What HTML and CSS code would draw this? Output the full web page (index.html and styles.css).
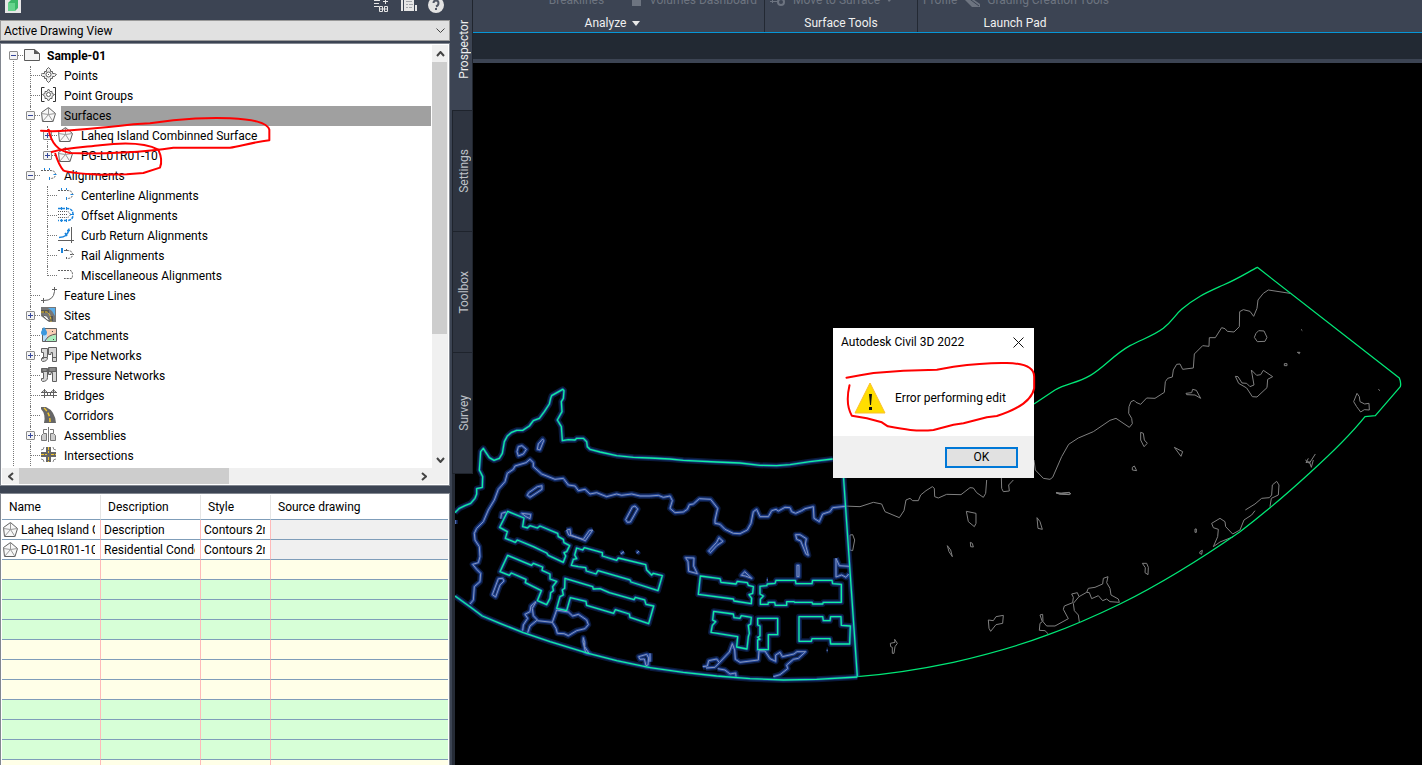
FILE: index.html
```
<!DOCTYPE html>
<html lang="en">
<head>
  <meta charset="UTF-8">
  <meta name="viewport" content="width=device-width, initial-scale=1.0">
  <title>Autodesk Civil 3D 2022</title>
  <link rel="stylesheet" href="styles.css">
</head>
<body>

  <!-- Icon set -->
  <svg class="sprite" aria-hidden="true">
    <symbol id="i-drawing" viewBox="0 0 16 16"><path d="M.5 2.500h10l5 4v7H.5z" fill="#f4f4f4" stroke="#5a5a5a"/><path d="M10 2l6 5h-6z" fill="#5a5a5a"/></symbol>
    <symbol id="i-points" viewBox="0 0 16 16" fill="none" stroke="#606060"><path d="M7.500 .5l2 2v2h2v2h2l2 1-2 2h-2v2h-2v2l-2 2-2-2v-2h-2v-2h-2l-2-2 2-1h2v-2h2v-2z" fill="#eee"/><circle cx="7.500" cy="7.500" r="2.500" fill="#fff"/><path d="M7 7.500h1"/></symbol>
    <symbol id="i-groups" viewBox="0 0 16 16" fill="none" stroke="#303030"><path d="M3.500 .5h-3v14h3M12 .5h2.500v14H12"/><path d="M7.500 2l1.500 2.500h2v2l2.500 1-2.500 2v2H9L7.500 14 6 11.500H4v-2L1.500 7.500 4 6.500v-2h2z" fill="#eee" stroke="#666"/><circle cx="7.500" cy="7.500" r="2" fill="#fff" stroke="#666"/></symbol>
    <symbol id="i-surface" viewBox="0 0 16 16" fill="#f8f8f8" stroke="#606060"><path d="M7.500 .5l7 6-2.500 8H1.500l-1-9z"/><path d="M7.500 .5v7l-7-1M7.500 7.500l7-1M7.500 7.500l-6 7M7.500 7.500l4.500 7" fill="none" stroke="#999"/></symbol>
    <symbol id="i-align" viewBox="0 0 16 16" fill="none" stroke="#606060"><path d="M0 3.500h9q5.500 0 5.500 4t-5.500 4" stroke-dasharray="2 1"/><path d="M3.500 1v2M8.500 1v2M12.500 7.500h3M8.500 10v3" stroke="#1a84dc"/></symbol>
    <symbol id="i-offset" viewBox="0 0 16 16" fill="none" stroke="#1a84dc"><path d="M0 1.500h9q6 0 6 6t-6 6H0" stroke-width="1.500" stroke-dasharray="3 1"/><path d="M0 4.500h8q4 0 4 3t-4 3H0M0 7.500h10" stroke="#555" stroke-dasharray="1 1"/><path d="M3.500 0v3M8.500 0v3M3.500 12v3M8.500 12v3M12 7.500h4"/></symbol>
    <symbol id="i-curb" viewBox="0 0 16 16" fill="none" stroke="#606060"><path d="M13.500 0v16M0 13.500h16"/><path d="M1 10.500q9 0 10-9M7 6l2 3M9 3.500h3" stroke="#1a84dc" stroke-width="1.500"/></symbol>
    <symbol id="i-rail" viewBox="0 0 16 16" fill="none" stroke="#606060"><path d="M0 3.500h9q5.500 0 5.500 4t-5.500 4M8.500 2v3M8.500 10v3M12 7.500h4" stroke-dasharray="2 1"/><path d="M4 1v5" stroke="#1a84dc" stroke-width="2"/></symbol>
    <symbol id="i-misc" viewBox="0 0 16 16" fill="none" stroke="#606060"><path d="M0 3.500h12q2.500 0 2.500 4.500T12 11.500H6" stroke-dasharray="2 1"/></symbol>
    <symbol id="i-feature" viewBox="0 0 16 16" fill="none" stroke="#606060"><path d="M0 13.500h3q9.500 0 10.500-9V0M11 2.500h5M2.500 11v5"/></symbol>
    <symbol id="i-sites" viewBox="0 0 16 16"><path d="M0 0h15v15H8L0 9z" fill="#777"/><path d="M7 1h7v8L11 4z" fill="#5aaeea"/><path d="M0 3h8v3H0zM9 9h3v5H9z" fill="#555"/><path d="M0 5h6q4 2 4 10" fill="none" stroke="#f3c62b" stroke-dasharray="3 1"/><path d="M1 8l5 1 3 5-3-1z" fill="#eee" stroke="#666"/></symbol>
    <symbol id="i-catch" viewBox="0 0 16 16"><path d="M1.500 1.500h14v13h-14z" fill="#f8ceb4" stroke="#606060"/><path d="M5 14q3-6 10-6v6z" fill="#a8eebc"/><path d="M2 7h4v7H2z" fill="#b9ddfa"/><path d="M4 14q3-6 11-7" fill="none" stroke="#555"/><path d="M3 0q3 4 3 5.500a3 3 0 01-6 0Q0 4 3 0z" fill="#3c98dd"/><path d="M11 4h1v1h-1zM12 12h1v1h-1z" fill="#444"/></symbol>
    <symbol id="i-pipe" viewBox="0 0 16 16" fill="#d6d6d6" stroke="#606060"><path d="M.5 1.500h6v9q0 4-5 4l-1-1v-2h2v-6h-2z"/><path d="M7.500 .5h8v14h-4v-9h-1.500v2H7.500zM1 10.500h5M11.500 10.500h4"/></symbol>
    <symbol id="i-pressure" viewBox="0 0 16 16" fill="#d6d6d6" stroke="#606060"><path d="M.5 1.500h6v9q0 4-5 4l-1-1v-2h2v-6h-2z"/><path d="M7.500 .5h8v14h-4v-9h-1.500v2H7.500z"/><path d="M1 1.500h5v3H1zM8 .5h7v4H8z" fill="#888"/></symbol>
    <symbol id="i-bridge" viewBox="0 0 16 16" fill="none" stroke="#606060"><path d="M0 5.500h16M0 8.500h16M3.500 2v9M12.500 2v9M6.500 5v4M9.500 5v4M1 5l2.500-2L6 5M10 5l2.500-2L15 5"/></symbol>
    <symbol id="i-corridor" viewBox="0 0 16 16"><path d="M0 0h5q9 4 10 16H3Q5 7 0 2z" fill="#666"/><path d="M3 1q6 5 6 14" fill="none" stroke="#f3c62b" stroke-width="1.500" stroke-dasharray="4 2"/></symbol>
    <symbol id="i-assembly" viewBox="0 0 16 16" fill="#ccc" stroke="#777"><path d="M.5 8.500l2-2h3v7h-5zM9.500 6.500h3l2 2v5h-5z"/><path d="M2.500 6V2.500H6M9 2.500h3.500V6" fill="none"/><path d="M7.500 0v15"/></symbol>
    <symbol id="i-intersect" viewBox="0 0 16 16"><path d="M5 0h5v5h5v5h-5v5H5v-5H0V5h5z" fill="#666"/><path d="M7.500 0v6M7.500 10v5M0 7.500h6M10 7.500h5" stroke="#f3c62b" stroke-dasharray="3 1"/><path d="M0 3q3 0 3-3M15 3q-3 0-3-3M0 12q3 0 3 3M15 12q-3 0-3 3" stroke="#888" fill="none"/></symbol>
  </svg>

  <div class="app">

    <!-- Toolspace palette -->
    <aside class="toolspace">
      <div class="palette-bar">
        <button class="tool cube" aria-label="Toggle view">
          <svg width="16" height="13"><path d="M0 0h16v13H0z" fill="#e6e6e6"/><path d="M3 3l3-3h7v8l-3 3H3z" fill="#3cb768"/><path d="M3 3h7v8H3z" fill="#66d48c"/></svg>
        </button>
        <button class="tool" aria-label="Item view"><svg width="16" height="13" stroke="#e6e6e6" fill="none"><path d="M0 .5h6M0 3.500h5M0 6.500h5M11.500 0v4M9 1.500h5"/><path d="M5.500 6.500h3v5h-3zM10.500 6.500h3v5h-3zM5 9h9"/></svg></button>
        <button class="tool" aria-label="Panorama"><svg width="16" height="13"><path d="M0 0h2v11H0zM3 0h10v11H3zM14 5h2v6h-2z" fill="#e6e6e6"/><path d="M5 1.500h6M5 4.500h2M8 4.500h4M5 7.500h2M8 7.500h3" stroke="#a2a5aa"/></svg></button>
        <button class="tool" aria-label="Help"><svg width="16" height="13"><circle cx="8" cy="5" r="8" fill="#e3e3e3"/><path d="M5.500 3q0-2.500 2.500-2.500T10.500 3 8 6.500" fill="none" stroke="#525866" stroke-width="2"/><path d="M7 8h2v2H7z" fill="#525866"/></svg></button>
      </div>

      <div class="view-picker">
        <select aria-label="View"><option>Active Drawing View</option></select>
        <svg class="chevron" width="9" height="6"><path d="M.5 .5l4 4 4-4" fill="none" stroke="#444"/></svg>
      </div>

      <div class="tree-panel">
        <ul class="tree">
          <li>
            <div class="row"><button class="toggle" aria-label="Collapse"></button><svg class="icon"><use href="#i-drawing"/></svg><b class="label">Sample-01</b></div>
            <ul>
              <li><div class="row"><svg class="icon"><use href="#i-points"/></svg><span class="label">Points</span></div></li>
              <li><div class="row"><svg class="icon"><use href="#i-groups"/></svg><span class="label">Point Groups</span></div></li>
              <li>
                <div class="row selected"><button class="toggle" aria-label="Collapse"></button><svg class="icon"><use href="#i-surface"/></svg><span class="label">Surfaces</span></div>
                <ul>
                  <li><div class="row"><button class="toggle closed" aria-label="Expand"></button><svg class="icon"><use href="#i-surface"/></svg><span class="label">Laheq Island Combinned Surface</span></div></li>
                  <li><div class="row"><button class="toggle closed" aria-label="Expand"></button><svg class="icon"><use href="#i-surface"/></svg><span class="label">PG-L01R01-10</span></div></li>
                </ul>
              </li>
              <li>
                <div class="row"><button class="toggle" aria-label="Collapse"></button><svg class="icon"><use href="#i-align"/></svg><span class="label">Alignments</span></div>
                <ul>
                  <li><div class="row"><svg class="icon"><use href="#i-align"/></svg><span class="label">Centerline Alignments</span></div></li>
                  <li><div class="row"><svg class="icon"><use href="#i-offset"/></svg><span class="label">Offset Alignments</span></div></li>
                  <li><div class="row"><svg class="icon"><use href="#i-curb"/></svg><span class="label">Curb Return Alignments</span></div></li>
                  <li><div class="row"><svg class="icon"><use href="#i-rail"/></svg><span class="label">Rail Alignments</span></div></li>
                  <li><div class="row"><svg class="icon"><use href="#i-misc"/></svg><span class="label">Miscellaneous Alignments</span></div></li>
                </ul>
              </li>
              <li><div class="row"><svg class="icon"><use href="#i-feature"/></svg><span class="label">Feature Lines</span></div></li>
              <li><div class="row"><button class="toggle closed" aria-label="Expand"></button><svg class="icon"><use href="#i-sites"/></svg><span class="label">Sites</span></div></li>
              <li><div class="row"><svg class="icon"><use href="#i-catch"/></svg><span class="label">Catchments</span></div></li>
              <li><div class="row"><button class="toggle closed" aria-label="Expand"></button><svg class="icon"><use href="#i-pipe"/></svg><span class="label">Pipe Networks</span></div></li>
              <li><div class="row"><svg class="icon"><use href="#i-pressure"/></svg><span class="label">Pressure Networks</span></div></li>
              <li><div class="row"><svg class="icon"><use href="#i-bridge"/></svg><span class="label">Bridges</span></div></li>
              <li><div class="row"><svg class="icon"><use href="#i-corridor"/></svg><span class="label">Corridors</span></div></li>
              <li><div class="row"><button class="toggle closed" aria-label="Expand"></button><svg class="icon"><use href="#i-assembly"/></svg><span class="label">Assemblies</span></div></li>
              <li><div class="row"><svg class="icon"><use href="#i-intersect"/></svg><span class="label">Intersections</span></div></li>
            </ul>
          </li>
        </ul>
        <div class="scroll-v">
          <button aria-label="Scroll up"><svg width="9" height="6"><path d="M1 5l3.500-4L8 5" /></svg></button>
          <div class="thumb"></div>
          <button aria-label="Scroll down"><svg width="9" height="6"><path d="M1 1l3.500 4L8 1"/></svg></button>
        </div>
        <div class="scroll-h">
          <button aria-label="Scroll left"><svg width="6" height="9"><path d="M5 1L1 4.500 5 8"/></svg></button>
          <div class="thumb"></div>
          <button aria-label="Scroll right"><svg width="6" height="9"><path d="M1 1l4 3.500L1 8"/></svg></button>
        </div>
        <!-- Markup around the two surfaces -->
        <svg class="markup tree-markup" viewBox="120 -25 696 195">
          <path d="M123 31L157 33C240 30 330 20 400 12L450 9 520 0C600-8 640-8 690-6 760-2 800 5 808 28L808 60C760 65 720 78 690 82L520 82C440 95 300 102 210 98 160 90 150 50 146 28"/>
          <path d="M155 95C200 82 260 80 300 75 380 65 440 70 475 88 485 110 485 130 480 142L430 158 380 162 300 163C240 160 200 155 190 150 178 135 172 120 166 100"/>
        </svg>
      </div>

      <div class="list-panel">
        <table>
          <colgroup><col class="c-name"><col class="c-desc"><col class="c-style"><col></colgroup>
          <thead>
            <tr><th>Name</th><th>Description</th><th>Style</th><th>Source drawing</th></tr>
          </thead>
          <tbody>
            <tr><td><div class="cell"><svg class="icon"><use href="#i-surface"/></svg><span>Laheq Island C</span></div></td><td><div class="cell"><span>Description</span></div></td><td><div class="cell"><span>Contours 2m</span></div></td><td class="locked"></td></tr>
            <tr><td><div class="cell"><svg class="icon"><use href="#i-surface"/></svg><span>PG-L01R01-10</span></div></td><td><div class="cell"><span>Residential Condo</span></div></td><td><div class="cell"><span>Contours 2m</span></div></td><td class="locked"></td></tr>
            <tr class="cream"><td></td><td></td><td></td><td></td></tr>
            <tr class="green"><td></td><td></td><td></td><td></td></tr>
            <tr class="green"><td></td><td></td><td></td><td></td></tr>
            <tr class="green"><td></td><td></td><td></td><td></td></tr>
            <tr class="cream"><td></td><td></td><td></td><td></td></tr>
            <tr class="cream"><td></td><td></td><td></td><td></td></tr>
            <tr class="cream"><td></td><td></td><td></td><td></td></tr>
            <tr class="green"><td></td><td></td><td></td><td></td></tr>
            <tr class="green"><td></td><td></td><td></td><td></td></tr>
            <tr class="green"><td></td><td></td><td></td><td></td></tr>
            <tr class="cream"><td></td><td></td><td></td><td></td></tr>
          </tbody>
        </table>
      </div>
    </aside>

    <main class="workspace">
      <nav class="side-tabs">
        <button class="active"><span>Prospector</span></button>
        <button><span>Settings</span></button>
        <button><span>Toolbox</span></button>
        <button><span>Survey</span></button>
      </nav>

      <div class="ribbon">
        <section class="panel analyze">
          <div class="commands"><span>Breaklines</span><svg width="9" height="12"><path d="M0 0h9v12H0z" fill="#6d7480"/></svg><span>Volumes Dashboard</span></div>
          <button class="panel-title">Analyze <svg width="8" height="5"><path d="M0 0h8L4 5z" fill="#e8e8e8"/></svg></button>
        </section>
        <section class="panel surface-tools">
          <div class="commands"><svg width="16" height="14" fill="none" stroke="#6d7480"><path d="M2.500 0v10M0 8.500h9"/><circle cx="11" cy="9" r="3" stroke-width="2"/></svg><span>Move to Surface</span><svg width="5" height="3"><path d="M0 0h5L2 3z" fill="#6d7480"/></svg></div>
          <div class="panel-title">Surface Tools</div>
        </section>
        <section class="panel launch">
          <div class="commands"><span>Profile</span><svg width="16" height="14"><path d="M0 6l6-2 10 7v3H8z" fill="#6d7480"/><path d="M3 4l12 9" stroke="#3c4453"/></svg><span>Grading Creation Tools</span></div>
          <div class="panel-title">Launch Pad</div>
        </section>
      </div>
      <div class="file-tabs"></div>

      <div class="canvas">
        <svg class="plan" viewBox="455 63 967 702" preserveAspectRatio="xMinYMin slice">
          <defs>
            <g id="sel-boundary">
              <g transform="translate(450 370) scale(.33333)">
                <path d="M15 428L28 415 45 407 62 400 75 385 80 372 80 356 97 352 98 320 88 300 92 245 100 235 106 245 118 263 132 271 148 265 157 250 163 215 172 198 185 187 200 181 218 181 238 168 250 152 268 145 283 125 298 102 302 85 305 77 338 58 342 62 340 85 334 95 336 125 322 150 334 170 337 212 355 209 375 210 380 205 400 205 410 215 412 230 420 238 450 246 500 257 550 262 600 264"/>
                <path d="M15 678L60 710 97 738 150 760 220 788 300 815 415 850 500 872 600 893"/>
                <path d="M173 424L222 444 218 470 232 474 240 467 262 474 270 468 323 490 325 500 340 508 342 518 359 527 350 545 342 548 347 558 340 577 295 556 290 549 250 530 202 510 196 517 166 505 172 485 149 472Z"/>
                <path d="M380 534L398 540 403 533 457 548 457 558 500 571 505 564 587 584 590 600 605 615 610 610 637 617 624 662 543 636 540 630 444 602 438 612 409 603 407 593 385 590 364 586 370 568 380 566 374 555Z"/>
                <path d="M173 556L245 586 250 580 278 591 276 601 300 612 300 627 320 634 308 650 310 662 302 668 300 685 290 704 262 692 274 662 226 638 228 628 184 609 178 616 150 605Z"/>
                <path d="M345 625L428 650 430 657 450 656 478 668 552 689 556 682 584 690 588 703 611 708 596 761 540 742 538 732 496 719 491 730 410 706 408 694 361 683 350 722 320 715 330 680 340 675 337 660 344 655Z"/>
              </g>
              <g transform="translate(650 440) scale(.33333)">
                <path d="M0 54L60 57 100 61 200 66 270 69 330 76 380 77 420 74 480 65 548 57M577 60L622 710"/>
                <path d="M0 683L100 697 200 708 300 716 400 720 500 718 622 711"/>
                <path d="M151 408L210 416 213 427 258 432 262 424 292 428 295 436 310 440 308 460 297 464 305 475 304 491 252 483 250 477 145 463Z"/>
                <path d="M330 439L350 437 352 432 375 430 378 421 436 421 438 431 486 431 488 421 546 421 548 431 574 433 574 487 520 487 518 492 488 492 486 487 434 487 432 485 410 485 410 496 376 496 374 487 355 487 354 493 331 493 331 478 340 468 330 462Z"/>
                <path d="M191 514L250 522 252 533 270 535 274 527 304 532 302 552 295 556 298 580 295 590 291 627 260 621 263 590 183 577 187 556 197 545 188 540Z"/>
                <path d="M323 535L383 535 383 584 355 584 355 629 323 629 323 600 330 598 323 592 330 588 330 558 323 555Z"/>
                <path d="M447 530L518 530 520 542 540 542 542 530 573 530 574 556 601 558 599 612 542 612 540 596 486 596 484 604 447 604Z"/>
              </g>
            </g>
            <g id="sel-contours">
              <g transform="translate(450 370) scale(.33333)">
                <path d="M60 702L70 690 73 650 90 635 92 610 80 598 68 583 85 578 90 560 88 530 75 510 73 490 80 475 100 455 115 420 133 390 145 358 165 335 172 310 190 298 195 288 228 278 240 268 250 278 250 290 275 312 315 328 340 325 355 345 375 348 385 362 405 358 420 372 440 368 470 380 500 372 515 376 545 372 570 378 600 378"/>
                <path d="M205 230L216 227 229 238 220 252 205 258 201 245ZM278 207L281 212 270 240 262 238 265 222ZM232 376L236 368 262 350 276 347 276 358 240 382ZM547 411L555 408 563 417 541 456 532 457 527 449ZM127 674L145 626 158 625 162 633 150 645 137 681Z"/>
                <path d="M152 446L155 430 168 426M215 430L242 433 240 446 228 440ZM350 480L360 478 362 495 406 512 428 480M350 480L356 495 400 508 418 482 428 480M512 552L522 545M560 550L567 543M15 450V462"/>
                <path d="M218 782L220 765 233 745 225 733 240 725 243 708 258 695M258 695L247 715 250 737 262 750 240 768 233 788M262 752L307 757 320 720 355 726 368 738 385 733 410 750 415 764 405 776 380 782 355 797 342 791 322 790 318 775 307 757M400 803L404 818 404 830 417 850 407 848 399 815ZM566 860L590 853 596 864 594 885 588 887 583 867 570 868Z"/>
              </g>
              <g transform="translate(650 440) scale(.33333)">
                <path d="M0 168L25 166 40 172 60 168 67 182 60 205 75 218 100 216 112 208 118 194 130 192 148 176 182 178 203 205 195 240 195 250 210 253 225 268 250 280 270 281 292 270 303 250 310 215 320 208 330 230 355 230 365 212 378 208 385 213 405 202 420 203 425 215 437 220 455 212 465 206 490 200 492 235 508 245 518 222 540 215 548 203 585 199"/>
                <path d="M176 333L200 307 207 293 219 304 200 317 181 338ZM107 353L132 354 131 378 142 401 116 394 114 365ZM437 284L450 284 469 296 466 312 475 346 468 342 452 303 440 298ZM274 406L284 395 305 415 286 408ZM441 376H447V410H441ZM558 355V411L575 405 588 412 596 402M558 355L568 377 597 379M350 420L354 420M530 631L533 631M0 640V665"/>
                <path d="M158 680L172 678 176 662 200 657 208 668 195 682 168 684M203 686L225 690 240 702 257 699 258 710M208 668L238 636 247 611 254 630 256 658 270 667 325 660 327 632 345 633 360 656 377 664 377 645 390 637 397 650 432 642 441 635 467 635 445 655 430 658 410 675 413 686 390 704 370 710"/>
              </g>
            </g>
          </defs>

          <!-- Unselected surface -->
          <g class="contour">
            <g transform="translate(1030 250) scale(.33333)">
              <path d="M12 630L16 660 40 685 60 688 68 682 95 620 116 583 145 564 190 545 240 511 258 505 298 532 307 521 305 505 296 490 297 470 303 455 312 451 318 457 332 463 350 444 375 445 403 427 406 395 413 385 427 381 430 360 440 343 450 342 458 358 490 354 493 312 518 287 537 289 538 263 556 263 575 233 585 236 592 244 612 246 628 230 629 185 640 179 660 184 671 199 681 175 684 150 700 130 715 120 780 130"/>
              <path d="M678 250L686 242 702 243 711 262 705 274 682 275 673 262ZM616 379L624 380 636 399 650 400 660 410 672 405 664 360 680 376 692 374 700 361 728 380 713 388 711 413 681 441 667 440 650 414 626 400ZM468 430L485 428 488 418 499 421 512 445 495 435 470 434ZM332 547L340 550 343 570 352 580 342 590 332 570ZM433 592L458 605 453 619ZM307 652L313 648 320 662 307 660ZM78 728L90 730 118 727 122 731 118 734 88 732ZM981 430L988 440 990 455 1004 462 1017 460 1018 480 1003 479 992 486 980 470 971 455ZM813 238L817 242M802 307L810 307 808 311ZM763 341L771 341 771 347H763ZM1045 418L1050 422M826 630L838 640 856 612M835 625L828 638 838 635 844 652 850 630M720 770L724 745 745 735 747 705 740 694 727 705 725 735 718 743 695 745 675 762 646 780"/>
            </g>
            <g transform="translate(840 480) scale(.33333)">
              <path d="M10 78L60 80 100 67 125 72 135 95 178 113 192 92 198 60 210 55 218 62 235 62 242 45 258 32 277 20 283 25 284 50 295 54 320 43 363 44 390 23 400 24 410 38 430 52 437 40 440 0M484-10L485 25 490 35 508 33 506 15 520 0M30 165L38 164 44 180 38 212 30 210ZM379 94L408 100 408 130 403 140 385 125ZM591 113L600 125 607 148 594 145ZM648 38L665 40 687 38 692 41 685 43 658 42ZM322 197L332 210 337 230 327 215ZM391 187L397 190 400 201 392 200ZM1065 147H1069V157H1065ZM1080 215L1087 211 1085 223 1079 220ZM907 250L920 250 925 262 924 284 915 278 916 263Z"/>
              <path d="M151 490L165 487 164 478 172 490 165 500 162 520 157 520V502L152 500ZM445 420L460 422 468 410 490 406 488 430 468 434 452 454 447 445ZM625 462L615 452 598 451 600 430 607 425 600 405 608 403 609 425 620 438 645 438 685 416 670 388 673 378 698 368 700 352 695 342 712 338 717 350 700 370 703 392 715 405 718 426M717 350L740 337 745 325 765 322 788 312 790 295 804 290 800 308 810 325 813 345 835 357 838 367 810 365 800 357 788 362 775 347 755 356 748 338 740 337M1115 130L1140 115 1155 125 1157 140 1178 162 1200 150M1115 130L1120 143 1135 148 1133 170 1120 200 1140 186 1180 170"/>
              <path d="M1200 150L1212 120 1235 105 1245 92"/>
            </g>
          </g>
          <g class="boundary">
            <g transform="translate(1030 250) scale(.33333)">
              <path d="M12 462L75 420C110 400 140 400 180 377 225 350 250 315 300 287 335 268 370 258 400 235 430 210 435 195 455 178 500 140 530 128 580 105 620 88 655 66 682 52L1108 384Q1114 398 1111 410L1036 497 1005 500C960 556 900 614 840 668 770 732 700 792 630 845"/>
            </g>
            <g transform="translate(840 480) scale(.33333)">
              <path d="M52 590C150 582 245 567 340 547 440 524 535 498 625 464 700 437 770 406 840 372 965 310 1085 235 1200 155"/>
            </g>
          </g>

          <!-- Selected surface, highlighted -->
          <use class="halo" href="#sel-contours"/>
          <use class="halo" href="#sel-boundary"/>
          <use class="halo-inner strong" href="#sel-contours"/>
          <use class="halo-inner" href="#sel-boundary"/>
          <use class="core-contour" href="#sel-contours"/>
          <use class="core-boundary" href="#sel-boundary"/>
        </svg>
      </div>

      <div class="dialog" role="alertdialog" aria-labelledby="dlg-title">
        <header>
          <span id="dlg-title">Autodesk Civil 3D 2022</span>
          <button class="close" aria-label="Close"><svg width="11" height="11"><path d="M.5 .5l10 10M10.500 .5l-10 10" stroke="#111"/></svg></button>
        </header>
        <div class="message">
          <svg width="32" height="32"><path d="M16 1L31 31H1z" fill="#ffde00" stroke="#fbc02d" stroke-linejoin="round"/><path d="M15 12h3l-1 11h-1zM15 25h3v3h-3z" fill="#111"/></svg>
          <p>Error performing edit</p>
        </div>
        <footer><button class="ok">OK</button></footer>
        <svg class="markup dialog-markup" viewBox="75 120 575 216">
          <path d="M79 173L120 166 160 159 250 152 350 149 400 140C460 132 520 128 560 129 620 130 642 145 642 170L642 205C635 240 600 265 530 288L500 292 430 310 400 314 340 330C290 335 250 328 203 319L185 307 140 295 95 287C82 265 80 230 88 196"/>
        </svg>
      </div>
    </main>

  </div>

</body>
</html>
```
FILE: styles.css
```
* {
  box-sizing: border-box;
  margin: 0;
  padding: 0;
}

body {
  background: #000;
  color: #000;
  font-family: Roboto, "Noto Sans", sans-serif;
  font-size: 12px;
  line-height: 20px;
  overflow: hidden;
}

button {
  border: 0;
  background: none;
  font: inherit;
  color: inherit;
}

ul {
  list-style: none;
}

.sprite {
  display: none;
}

.icon {
  width: 16px;
  height: 16px;
  flex: none;
}

.app {
  display: flex;
  height: 100vh;
}

/* Toolspace */
.toolspace {
  width: 455px;
  flex: none;
  display: flex;
  flex-direction: column;
  padding-right: 5px;
  background: #3c4453;
  box-shadow: inset -3px 0 #262c37;
}

.palette-bar {
  display: flex;
  gap: 11px;
  height: 20px;
  padding: 0 6px 0 5px;
}

.tool {
  width: 16px;
  height: 13px;
}

.tool svg {
  display: block;
}

.tool.cube {
  margin-right: auto;
}

.view-picker {
  position: relative;
  height: 21px;
  margin-bottom: 2px;
}

.view-picker select {
  width: 100%;
  height: 21px;
  padding: 0 3px;
  appearance: none;
  border: 1px solid #999;
  border-radius: 0;
  background: #e1e1e1;
  color: #000;
  font: inherit;
}

.chevron {
  position: absolute;
  right: 5px;
  top: 8px;
}

.tree-panel {
  position: relative;
  display: grid;
  grid-template-columns: 1fr 16px;
  padding: 1px;
  margin-bottom: 7px;
  border: 1px solid #828790;
  background: #fff;
}

.tree {
  padding: 1px 0 2px;
}

.tree ul {
  padding-left: 17px;
}

.tree li {
  position: relative;
}

/* dotted connectors */
.tree li::before {
  content: "";
  position: absolute;
  left: 11px;
  top: 0;
  bottom: 0;
  border-left: 1px dotted #777;
}

.tree > li::before {
  top: 10px;
}

.tree ul ul > li:last-child::before {
  bottom: 10px;
}

.row {
  position: relative;
  display: flex;
  align-items: center;
  height: 20px;
  padding-left: 22px;
}

.row::before {
  content: "";
  position: absolute;
  left: 11px;
  top: 9px;
  width: 10px;
  border-top: 1px dotted #777;
}

.row .icon {
  margin-bottom: 2px;
}

.toggle {
  position: relative;
  width: 9px;
  height: 9px;
  margin: 0 6px 1px -15px;
  border: 1px solid #8c8c8c;
  border-radius: 1px;
  background: linear-gradient(#35479b, #35479b) center / 5px 1px no-repeat, #f4f4f4;
}

.toggle.closed {
  background: linear-gradient(#35479b, #35479b) center / 5px 1px no-repeat, linear-gradient(#35479b, #35479b) center / 1px 5px no-repeat, #f4f4f4;
}

.label {
  margin-left: 4px;
  padding-left: 3px;
  white-space: nowrap;
}

.row.selected .label {
  flex: 1;
  margin-right: 1px;
  background: #a0a0a0;
}

.scroll-v,
.scroll-h {
  display: flex;
  background: #f0f0f0;
}

.scroll-v {
  flex-direction: column;
}

.scroll-h {
  grid-column: 1 / -1;
  height: 16px;
  padding-right: 16px;
}

.scroll-v button,
.scroll-h button {
  display: grid;
  place-items: center;
  width: 17px;
  height: 17px;
}

.scroll-v svg,
.scroll-h svg {
  fill: none;
  stroke: #444;
  stroke-width: 2;
}

.scroll-v .thumb {
  height: 272px;
  margin: 0 1px 0 0;
  background: #cdcdcd;
}

.scroll-h .thumb {
  width: 210px;
  background: #cdcdcd;
}

.thumb + button {
  margin-top: auto;
}

.scroll-h .thumb + button {
  margin: 0 0 0 auto;
}

.markup {
  position: absolute;
  fill: none;
  stroke: #f00;
  stroke-width: 6;
  stroke-linecap: round;
  stroke-linejoin: round;
  pointer-events: none;
}

.tree-markup {
  left: 39px;
  top: 68px;
  width: 232px;
  height: 65px;
}

/* Item list */
.list-panel {
  flex: 1;
  min-height: 0;
  overflow: hidden;
  padding: 1px;
  border: 1px solid #828790;
  border-bottom: 0;
  background: #fff;
}

table {
  width: 100%;
  table-layout: fixed;
  border-collapse: separate;
  border-spacing: 0;
}

.c-name {
  width: 99px;
}

.c-desc {
  width: 100px;
}

.c-style {
  width: 70px;
}

th {
  height: 25px;
  padding-left: 7px;
  border-right: 1px solid #e5e5e5;
  border-bottom: 1px solid #7f9db9;
  font-weight: normal;
  text-align: left;
}

th:last-child {
  border-right: 0;
}

td {
  height: 20px;
  border-right: 1px solid #ffb9b9;
  border-bottom: 1px solid #7f9db9;
}

td:last-child {
  border-right: 0;
}

.cell {
  display: flex;
  align-items: center;
  gap: 2px;
  height: 19px;
  padding: 0 5px 0 3px;
}

td:first-child .cell {
  padding-left: 1px;
}

.cell span {
  overflow: hidden;
  white-space: nowrap;
}

.locked {
  background: #f0f0f0;
}

.cream {
  background: #ffffe8;
}

.green {
  background: #d7ffd7;
}

/* Workspace */
.workspace {
  position: relative;
  flex: 1;
  min-width: 0;
  display: flex;
  flex-direction: column;
}

.side-tabs {
  position: absolute;
  z-index: 2;
  left: -3px;
  top: 0;
  width: 21px;
  border-right: 1px solid #20252e;
}

.side-tabs button {
  display: flex;
  align-items: center;
  justify-content: center;
  width: 20px;
  height: 121px;
  padding-left: 3px;
  border-bottom: 1px solid #1e232c;
  border-left: 1px solid #1e232c;
  background: #2e3440;
  color: #bfc2c8;
}

.side-tabs .active {
  height: 111px;
  padding-bottom: 12px;
  border-left: 0;
  background: #3c4453;
  color: #eee;
}

.side-tabs span {
  writing-mode: vertical-rl;
  transform: rotate(180deg);
}

.ribbon {
  display: flex;
  height: 33px;
  margin-left: 18px;
  border-bottom: 1px solid #0696d7;
  background: #3c4453;
  color: #f0f0f0;
  overflow: hidden;
}

.panel {
  display: flex;
  flex-direction: column;
  align-items: center;
  flex: none;
  border-right: 1px solid #232933;
}

.analyze {
  width: 292px;
}

.surface-tools {
  width: 153px;
}

.launch {
  width: 194px;
  border-right: 0;
}

.commands {
  display: flex;
  align-items: center;
  align-self: stretch;
  gap: 7px;
  height: 20px;
  margin-top: -10px;
  padding-left: 5px;
  color: #6d7480;
  white-space: nowrap;
}

.analyze .commands {
  justify-content: flex-end;
  gap: 8px;
  padding-right: 7px;
}

.analyze .commands span:first-child {
  margin-right: 20px;
}

.panel-title {
  display: flex;
  align-items: center;
  gap: 6px;
  height: 20px;
  margin-top: 3px;
}

.analyze .panel-title {
  margin-right: 12px;
}

.file-tabs {
  height: 30px;
  margin-left: 18px;
  border-bottom: 4px solid #3c4453;
  background: #222933;
}

.canvas {
  flex: 1;
  min-height: 0;
  background: #000;
}

.plan {
  display: block;
  width: 100%;
  height: 100%;
}

.plan path {
  fill: none;
  stroke-linejoin: round;
  vector-effect: non-scaling-stroke;
}

.contour {
  stroke: #808080;
}

.boundary {
  stroke: #00e676;
  stroke-width: 1.3;
}

.halo {
  stroke: #1c3f94;
  stroke-width: 6;
  stroke-opacity: .4;
}

.halo-inner {
  stroke: #205cb8;
  stroke-width: 3;
  stroke-opacity: .6;
}

.halo-inner.strong {
  stroke: #2f5fd0;
}

.core-contour {
  stroke: #8494bd;
}

.core-boundary {
  stroke: #10f0a0;
  stroke-width: 1.3;
}

/* Message box */
.dialog {
  position: absolute;
  z-index: 3;
  left: 378px;
  top: 328px;
  width: 201px;
  background: #fff;
}

.dialog header {
  display: flex;
  align-items: center;
  justify-content: space-between;
  height: 28px;
  padding: 0 10px 0 8px;
}

.close {
  width: 11px;
  height: 11px;
}

.close svg {
  display: block;
}

.message {
  display: flex;
  align-items: center;
  gap: 9px;
  height: 80px;
  padding: 4px 21px 0;
}

.message svg {
  flex: none;
}

.message p {
  white-space: nowrap;
}

.dialog footer {
  display: flex;
  justify-content: flex-end;
  padding: 11px 16px 10px;
  background: #f0f0f0;
}

.ok {
  width: 73px;
  height: 21px;
  border: 2px solid #0078d7;
  background: #e1e1e1;
  line-height: 17px;
}

.dialog-markup {
  left: 12px;
  top: 32px;
  width: 192px;
  height: 72px;
}
```
